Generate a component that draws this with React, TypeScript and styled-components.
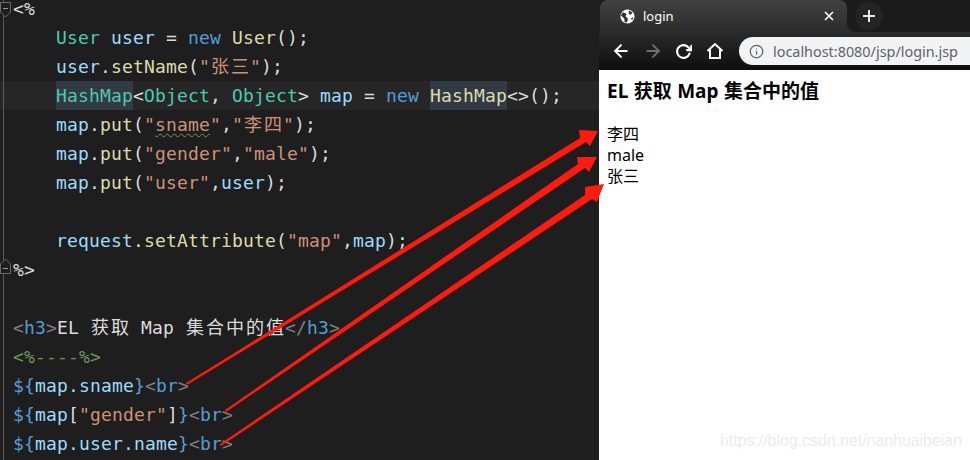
import React from "react";
import styled, { createGlobalStyle } from "styled-components";
import { FiArrowLeft, FiArrowRight, FiRotateCw, FiInfo } from "react-icons/fi";

const Global = createGlobalStyle`
  html, body { margin: 0; padding: 0; background: #1e1e1e; }
  #root { width: 970px; height: 460px; overflow: hidden; }
`;

const Page = styled.div`
  position: relative;
  display: flex;
  width: 970px;
  height: 460px;
  overflow: hidden;
`;

const Editor = styled.div`
  position: relative;
  width: 599px;
  flex: none;
  background: #1e1e1e;
  overflow: hidden;
`;

const Gutter = styled.div`
  position: absolute;
  left: 3px;
  top: 0;
  bottom: 0;
  width: 1px;
  background: #5a5a5a;
  z-index: 1;
`;

const FoldMark = styled.svg<{ $top: number }>`
  position: absolute;
  left: 0;
  top: ${(p) => p.$top}px;
  z-index: 2;
`;

const Code = styled.div`
  font-family: "DejaVu Sans Mono", "Noto Sans CJK SC", monospace;
  font-size: 18px;
  letter-spacing: 0.16px;
  color: #dcdcdc;
`;

const Line = styled.div<{ $current?: boolean; $first?: boolean }>`
  height: ${(p) => (p.$first ? 23 : 29)}px;
  line-height: ${(p) => (p.$first ? 17 : 29)}px;
  padding-left: 13px;
  white-space: pre;
  background: ${(p) => (p.$current ? "#262627" : "transparent")};
`;

const Indent = styled.span`
  display: inline-block;
  width: 43px;
`;

const Cjk = styled.span`
  display: inline-block;
  width: 20px;
  font-size: 18px;
  letter-spacing: 0;
  text-align: center;
`;

const T = styled.span<{ $c: string }>`
  color: ${(p) => p.$c};
`;

const Hl = styled.span`
  background: #323a44;
  display: inline-block;
  height: 29px;
`;

const Squiggle = styled.span`
  text-decoration: underline wavy #6b9955;
  text-decoration-thickness: 1px;
  text-underline-offset: 2px;
`;

const Browser = styled.div`
  flex: 1;
  display: flex;
  flex-direction: column;
  background: #fff;
  min-width: 0;
`;

const TabStrip = styled.div`
  height: 32px;
  flex: none;
  display: flex;
  align-items: flex-end;
  gap: 8px;
  padding-left: 1px;
  background: #1b1b1b;
`;

const Tab = styled.div`
  position: relative;
  width: 247px;
  height: 32px;
  box-sizing: border-box;
  display: flex;
  align-items: center;
  padding: 0 13px 0 20px;
  gap: 8px;
  border-radius: 8px 8px 0 0;
  background: linear-gradient(#414141, #2c2c2c);
  color: #fff;
  font: 13px "Noto Sans", sans-serif;

  &::after {
    content: "";
    position: absolute;
    right: -8px;
    bottom: 0;
    width: 8px;
    height: 8px;
    background: radial-gradient(circle at 100% 0, #1b1b1b 7.5px, #2c2c2c 8px);
  }
`;

const TabTitle = styled.span`
  flex: 1;
`;

const NewTab = styled.div`
  width: 28px;
  height: 28px;
  margin-bottom: 2px;
  border-radius: 50%;
  background: #242424;
  display: flex;
  align-items: center;
  justify-content: center;
`;

const Toolbar = styled.div`
  height: 38px;
  flex: none;
  display: flex;
  align-items: center;
  padding-left: 12px;
  background: linear-gradient(#2b2b2b, #0e0e0e);
`;

const NavButton = styled.div<{ $w: number }>`
  width: ${(p) => p.$w}px;
  display: flex;
  align-items: center;
  flex: none;
`;

const Address = styled.div`
  flex: 1;
  height: 28px;
  margin-left: 1px;
  display: flex;
  align-items: center;
  gap: 9px;
  padding-left: 10px;
  border-radius: 14px 0 0 14px;
  background: #f1f3f4;
  color: #5f6368;
  font: 14.4px "Noto Sans", sans-serif;
`;

const Content = styled.div`
  flex: 1;
  padding: 8px;
  color: #000;
  font-family: "Noto Sans", "Noto Sans CJK SC", sans-serif;
  font-size: 16px;
`;

const Heading = styled.h3`
  margin: 0 0 20px;
  font-size: 19px;
  line-height: 26px;
  font-weight: 700;
  word-spacing: 0.5px;
`;

const Out = styled.div`
  height: 21px;
  line-height: 21px;
`;

const Overlay = styled.svg`
  position: absolute;
  left: 0;
  top: 0;
  pointer-events: none;
`;

const Watermark = styled.div`
  position: absolute;
  right: 8px;
  bottom: 10px;
  color: #ececec;
  font: 15.9px "Liberation Sans", sans-serif;
`;

const C = {
  teal: "#4ec9b0",
  blue: "#9cdcfe",
  kw: "#569cd6",
  fn: "#dcdcaa",
  str: "#ce9178",
  tag: "#808080",
  tn: "#569cd6",
  green: "#6a9955",
};

const Tx = ({ children }: { children: string }) => <Cjk>{children}</Cjk>;

export default function App() {
  return (
    <Page>
      <Global />
      <Editor>
        <Gutter />
        <FoldMark $top={2} width="12" height="18" viewBox="0 0 12 18">
          <path d="M.5 .5H10.5V10L5.5 15L.5 10Z" fill="#1e1e1e" stroke="#6a6a6a" />
          <path d="M3 6.5H8" stroke="#9a9a9a" />
        </FoldMark>
        <FoldMark $top={258} width="12" height="18" viewBox="0 0 12 18">
          <path d="M.5 15.5H10.5V6L5.5 1L.5 6Z" fill="#1e1e1e" stroke="#6a6a6a" />
          <path d="M3 10.5H8" stroke="#9a9a9a" />
        </FoldMark>
        <Code>
          <Line $first>{"<%"}</Line>
          <Line>
            <Indent />
            <T $c={C.teal}>User</T> <T $c={C.blue}>user</T> = <T $c={C.kw}>new</T> <T $c={C.fn}>User</T>();
          </Line>
          <Line>
            <Indent />
            <T $c={C.blue}>user</T>.<T $c={C.fn}>setName</T>(
            <T $c={C.str}>"<Tx>张</Tx><Tx>三</Tx>"</T>);
          </Line>
          <Line $current>
            <Indent />
            <Hl><T $c={C.teal}>HashMap</T></Hl>{"<"}<T $c={C.teal}>Object</T>, <T $c={C.teal}>Object</T>{"> "}
            <T $c={C.blue}>map</T> = <T $c={C.kw}>new</T> <Hl><T $c={C.fn}>HashMap</T></Hl>{"<>();"}
          </Line>
          <Line>
            <Indent />
            <T $c={C.blue}>map</T>.<T $c={C.fn}>put</T>(
            <T $c={C.str}>"<Squiggle>sname</Squiggle>"</T>,<T $c={C.str}>"<Tx>李</Tx><Tx>四</Tx>"</T>);
          </Line>
          <Line>
            <Indent />
            <T $c={C.blue}>map</T>.<T $c={C.fn}>put</T>(<T $c={C.str}>"gender"</T>,<T $c={C.str}>"male"</T>);
          </Line>
          <Line>
            <Indent />
            <T $c={C.blue}>map</T>.<T $c={C.fn}>put</T>(<T $c={C.str}>"user"</T>,<T $c={C.blue}>user</T>);
          </Line>
          <Line />
          <Line>
            <Indent />
            <T $c={C.blue}>request</T>.<T $c={C.fn}>setAttribute</T>(<T $c={C.str}>"map"</T>,<T $c={C.blue}>map</T>);
          </Line>
          <Line>{"%>"}</Line>
          <Line />
          <Line>
            <T $c={C.tag}>{"<"}</T><T $c={C.tn}>h3</T><T $c={C.tag}>{">"}</T>EL <Tx>获</Tx><Tx>取</Tx> Map <Tx>集</Tx><Tx>合</Tx><Tx>中</Tx><Tx>的</Tx><Tx>值</Tx>
            <T $c={C.tag}>{"</"}</T><T $c={C.tn}>h3</T><T $c={C.tag}>{">"}</T>
          </Line>
          <Line><T $c={C.green}>{"<%----%>"}</T></Line>
          <Line>
            <T $c={C.kw}>{"${"}</T><T $c={C.blue}>map.sname</T><T $c={C.kw}>{"}"}</T>
            <T $c={C.tag}>{"<"}</T><T $c={C.tn}>br</T><T $c={C.tag}>{">"}</T>
          </Line>
          <Line>
            <T $c={C.kw}>{"${"}</T><T $c={C.blue}>map</T>[<T $c={C.str}>"gender"</T>]<T $c={C.kw}>{"}"}</T>
            <T $c={C.tag}>{"<"}</T><T $c={C.tn}>br</T><T $c={C.tag}>{">"}</T>
          </Line>
          <Line>
            <T $c={C.kw}>{"${"}</T><T $c={C.blue}>map.user.name</T><T $c={C.kw}>{"}"}</T>
            <T $c={C.tag}>{"<"}</T><T $c={C.tn}>br</T><T $c={C.tag}>{">"}</T>
          </Line>
        </Code>
      </Editor>
      <Browser>
        <TabStrip>
          <Tab>
            <svg width="15" height="15" viewBox="0 0 16 16">
              <circle cx="8" cy="8" r="7.5" fill="#fff" />
              <path d="M3 3.5L7 5L6 8L8.5 10L7.5 14.5L5 14L4.5 10L1 7ZM10 1.5L13.5 4L11 6.5L9 4ZM14.5 8.5L13 12L11.5 10Z" fill="#333" />
            </svg>
            <TabTitle>login</TabTitle>
            <svg width="10" height="10" viewBox="0 0 10 10">
              <path d="M1 1L9 9M9 1L1 9" stroke="#fff" strokeWidth="1.6" />
            </svg>
          </Tab>
          <NewTab>
            <svg width="12" height="12" viewBox="0 0 12 12">
              <path d="M6 0V12M0 6H12" stroke="#e8e8e8" strokeWidth="2" />
            </svg>
          </NewTab>
        </TabStrip>
        <Toolbar>
          <NavButton $w={32}><FiArrowLeft size={20} color="#fff" strokeWidth={2.4} /></NavButton>
          <NavButton $w={32}><FiArrowRight size={20} color="#6e6e6e" strokeWidth={2.4} /></NavButton>
          <NavButton $w={31}><FiRotateCw size={17} color="#fff" strokeWidth={3} /></NavButton>
          <NavButton $w={32}>
            <svg width="18" height="18" viewBox="0 0 18 18">
              <path d="M1.5 9L9 2L16.5 9M4 7.5V16H14V7.5" fill="none" stroke="#fff" strokeWidth="2" />
            </svg>
          </NavButton>
          <Address>
            <FiInfo size={15} color="#5f6368" strokeWidth={2} />
            <span>localhost:8080/jsp/login.jsp</span>
          </Address>
        </Toolbar>
        <Content>
          <Heading>EL 获取 Map 集合中的值</Heading>
          <Out>李四</Out>
          <Out>male</Out>
          <Out>张三</Out>
        </Content>
      </Browser>
      <Overlay width="970" height="460" viewBox="0 0 970 460">
        <g fill="#ff1a10">
          <path d="M186 383L580 138L579 130L598 131L590 146L586 142L187 385Z" />
          <path d="M225 410L578 164L577 157L597 157L589 172L585 168L226 412Z" />
          <path d="M220 444L585 195L585 187L604 184L597 202L592 199L221 446Z" />
        </g>
      </Overlay>
      <Watermark>https://blog.csdn.net/nanhuaibeian</Watermark>
    </Page>
  );
}
